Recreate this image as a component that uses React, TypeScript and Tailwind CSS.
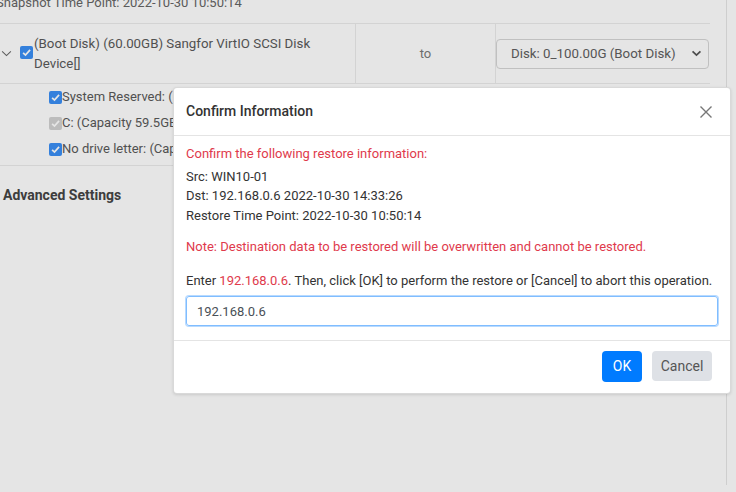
import type { ReactNode } from "react";

type CheckProps = {
  disabled?: boolean;
};

function Check({ disabled }: CheckProps) {
  return (
    <span
      className={`inline-flex h-[13px] w-[13px] shrink-0 items-center justify-center rounded-[2px] ${
        disabled ? "bg-[#d2d2d2]" : "bg-[#3a8ff5]"
      }`}
    >
      <svg viewBox="0 0 12 12" className="h-[11px] w-[11px]">
        <path d="M2.3 6.3 4.9 8.8 9.9 3.2" fill="none" stroke="#fff" strokeWidth="1.9" />
      </svg>
    </span>
  );
}

function SubRow({ children, disabled }: { children: ReactNode; disabled?: boolean }) {
  return (
    <div className="flex h-[26px] items-center pl-[49px]">
      <Check disabled={disabled} />
      <span className="whitespace-nowrap">{children}</span>
    </div>
  );
}

export default function App() {
  return (
    <div className="relative h-[492px] w-[736px] overflow-hidden bg-white font-['Roboto','Liberation_Sans',sans-serif] text-[13px] text-[#5a5a5a]">
      <div className="h-full w-[727px] border-r border-[#e6e6e6]">
        <div className="-ml-[4px] -mt-[7px] whitespace-nowrap leading-[20px] text-[#666]">
          Snapshot Time Point: 2022-10-30 10:50:14
        </div>

        <div className="mt-[10px] w-[710px] border-y border-[#ebebeb]">
          <div className="flex h-[60px] border-b border-[#ebebeb]">
            <div className="flex w-[355px] items-center">
              <svg viewBox="0 0 12 8" className="ml-[1px] h-[7px] w-[11px]">
                <path d="M1 1.5 6 6.3 11 1.5" fill="none" stroke="#666" strokeWidth="1.2" />
              </svg>
              <span className="ml-[8px]">
                <Check />
              </span>
              <span className="ml-[1px] text-[13.3px] leading-[20px]">
                (Boot Disk) (60.00GB) Sangfor VirtIO SCSI Disk
                <br />
                Device[]
              </span>
            </div>
            <div className="flex w-[140px] items-center justify-center border-l border-[#ebebeb] text-[#7a7a7a]">
              to
            </div>
            <div className="flex flex-1 items-center border-l border-[#ebebeb] pr-[1px]">
              <div className="flex h-[30px] w-full items-center justify-between rounded-[4px] border border-[#d6d6d6] pl-[14px] pr-[6px] text-[13.3px] text-[#606060]">
                <span>Disk: 0_100.00G (Boot Disk)</span>
                <svg viewBox="0 0 12 8" className="h-[7px] w-[11px]">
                  <path d="M1.5 1.5 6 5.8 10.5 1.5" fill="none" stroke="#555" strokeWidth="2" />
                </svg>
              </div>
            </div>
          </div>

          <div className="pb-[3px]">
            <SubRow>System Reserved: (Capacity 500.0MB)</SubRow>
            <SubRow disabled>C: (Capacity 59.5GB)</SubRow>
            <SubRow>No drive letter: (Capacity 0.0MB)</SubRow>
          </div>
        </div>

        <div className="ml-[3px] mt-[19px] text-[14px] font-bold leading-[20px] text-[#444]">
          Advanced Settings
        </div>
      </div>

      <div className="absolute inset-0 bg-black/10" />

      <div className="absolute left-[173px] top-[87px] w-[558px] rounded-[4px] border border-black/15 bg-white text-[#333] shadow-[0_1px_3px_rgba(0,0,0,0.12)]">
        <div className="flex h-[48px] items-center justify-between border-b border-[#e4e4e4] px-[12px]">
          <span className="text-[14px] font-medium">Confirm Information</span>
          <svg viewBox="0 0 14 14" className="mr-[5px] h-[14px] w-[14px]">
            <path d="M1.5 1.5 12.5 12.5M12.5 1.5 1.5 12.5" stroke="#777" strokeWidth="1.4" />
          </svg>
        </div>

        <div className="px-[12px] pb-[14px] pt-[8px] leading-[19.5px]">
          <p className="mb-[3px] text-[#e03a4c]">Confirm the following restore information:</p>
          <p>Src: WIN10-01</p>
          <p>Dst: 192.168.0.6 2022-10-30 14:33:26</p>
          <p>Restore Time Point: 2022-10-30 10:50:14</p>
          <p className="mt-[12px] text-[#e03a4c]">
            Note: Destination data to be restored will be overwritten and cannot be restored.
          </p>
          <p className="mt-[14px] whitespace-nowrap">
            Enter <span className="text-[#e03a4c]">192.168.0.6</span>. Then, click [OK] to perform the
            restore or [Cancel] to abort this operation.
          </p>
          <input
            readOnly
            value="192.168.0.6"
            className="mt-[6px] h-[30px] w-full rounded-[3px] border border-[#80bdff] px-[10px] text-[13px] text-[#495057] shadow-[0_0_0_1px_#b8daff] outline-none"
          />
        </div>

        <div className="flex items-start justify-end gap-[10px] border-t border-[#e4e4e4] pb-[11px] pr-[18px] pt-[10px]">
          <button
            type="button"
            className="h-[31px] w-[40px] rounded-[4px] bg-[#007bff] text-[14px] text-white"
          >
            OK
          </button>
          <button
            type="button"
            className="h-[30px] w-[60px] rounded-[4px] bg-[#dee1e6] text-[14px] text-[#555]"
          >
            Cancel
          </button>
        </div>
      </div>
    </div>
  );
}
